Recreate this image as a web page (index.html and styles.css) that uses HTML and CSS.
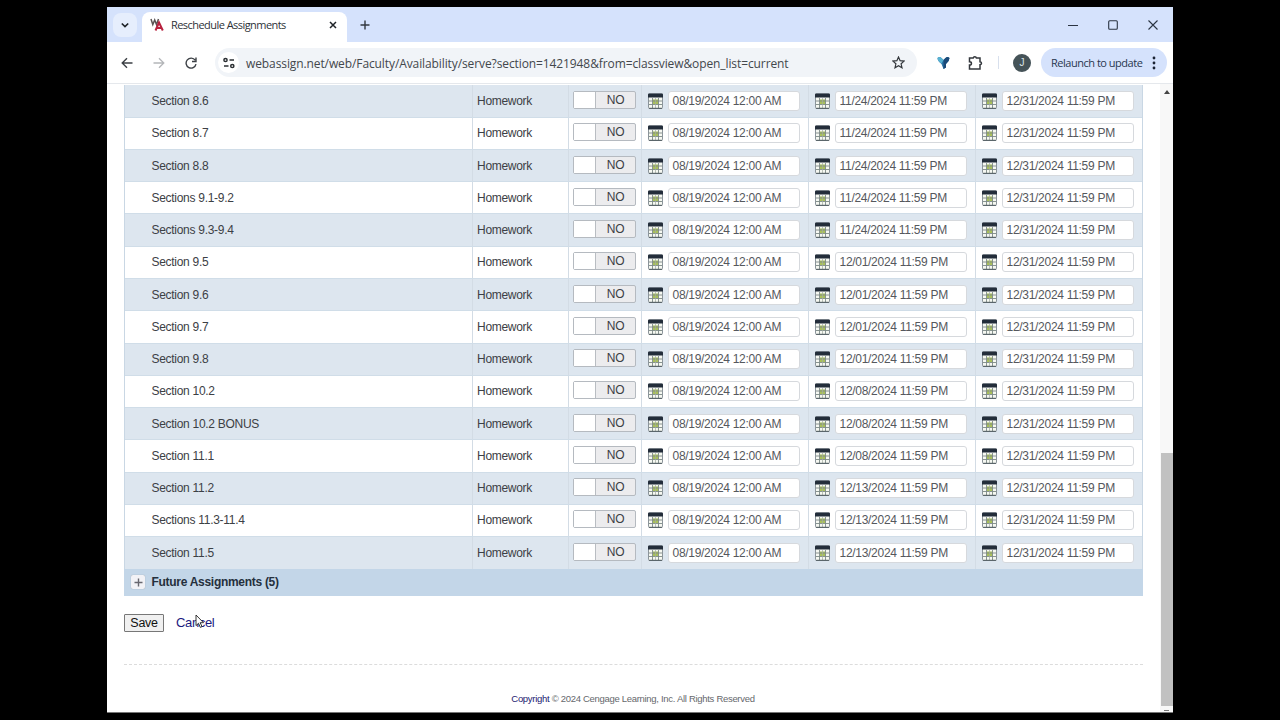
FILE: index.html
```html
<!DOCTYPE html>
<html lang="en">
<head>
    <meta charset="UTF-8">
    <title>Reschedule Assignments</title>
    <link rel="stylesheet" href="styles.css">
</head>
<body>
    <svg class="defs" width="0" height="0">
        <symbol id="calendar" viewBox="0 0 15 16">
            <rect x="0.5" y="1" width="14" height="14.5" rx="1" fill="#f6f8f2" stroke="#8b949a"/>
            <rect x="5" y="6.5" width="5.5" height="4.5" fill="#a9c05a"/>
            <path d="M1 8h13M1 11.5h13M4.5 5v10M10.5 5v10" stroke="#7d8986" stroke-width="0.9" fill="none"/>
            <path d="M7.5 5v10" stroke="#a3aea0" stroke-width="0.7"/>
            <path d="M1 15.3h13" stroke="#4f5a60"/>
            <path d="M0 1.5Q0 0.5 1 0.5h13q1 0 1 1v3H0z" fill="#232d3a"/>
        </symbol>
    </svg>
    <div class="window">
        <div class="tab-strip">
            <div class="tab-search">
                <svg width="10" height="10" viewBox="0 0 10 10"><path d="M1.8 3.5L5 6.6l3.2-3.1" fill="none" stroke="#1f2328" stroke-width="1.7"/></svg>
            </div>
            <div class="tab">
                <svg class="favicon" width="14" height="14" viewBox="0 0 14 14">
                    <path d="M1 1l1.8 5.6L4.7 2l1.8 4.6L8.5 1" fill="none" stroke="#5a5454" stroke-width="1.5"/>
                    <path d="M5.5 12.5L9 4.5l3.8 8M7 10h4.5" fill="none" stroke="#b8223f" stroke-width="2"/>
                </svg>
                <span class="tab-title">Reschedule Assignments</span>
                <svg class="tab-close" width="8" height="8" viewBox="0 0 8 8"><path d="M1 1l6 6M7 1L1 7" stroke="#1f2328" stroke-width="1.5"/></svg>
            </div>
            <svg class="new-tab" width="10" height="10" viewBox="0 0 10 10"><path d="M5 0.5v9M0.5 5h9" stroke="#33383f" stroke-width="1.4"/></svg>
            <div class="window-buttons">
                <svg width="10" height="10" viewBox="0 0 10 10"><path d="M0 5.5h10" stroke="#2b3442"/></svg>
                <svg width="10" height="10" viewBox="0 0 10 10"><rect x="0.7" y="0.7" width="8.6" height="8.6" rx="1" fill="none" stroke="#2b3442" stroke-width="1.1"/></svg>
                <svg width="10" height="10" viewBox="0 0 10 10"><path d="M0.5 0.5l9 9M9.5 0.5l-9 9" stroke="#2b3442" stroke-width="1.1"/></svg>
            </div>
        </div>
        <div class="toolbar">
            <div class="nav">
                <svg width="12" height="12" viewBox="0 0 12 12"><path d="M11.5 6H1.3M6 1.2L1.2 6 6 10.8" fill="none" stroke="#3c4045" stroke-width="1.4"/></svg>
                <svg width="12" height="12" viewBox="0 0 12 12"><path d="M0.5 6h10.2M6 1.2L10.8 6 6 10.8" fill="none" stroke="#b4b6b9" stroke-width="1.3"/></svg>
                <svg width="12" height="12" viewBox="0 0 12 12"><path d="M10.2 3.2A5 5 0 1 0 11 7.2M11 0.5v4H7" fill="none" stroke="#3c4045" stroke-width="1.4"/></svg>
            </div>
            <div class="address">
                <div class="site-info">
                    <svg width="12" height="12" viewBox="0 0 12 12"><g fill="none" stroke="#2b2f33" stroke-width="1.5"><circle cx="2.5" cy="3" r="1.6"/><path d="M6.5 3h4.5M1 9h4.5"/><circle cx="9.3" cy="9" r="1.6"/></g></svg>
                </div>
                <span class="url">webassign.net/web/Faculty/Availability/serve?section=1421948&amp;from=classview&amp;open_list=current</span>
                <svg class="star" width="13" height="13" viewBox="0 0 13 13"><path d="M6.5 1l1.6 3.7 4 .4-3 2.7.9 4-3.5-2.1L3 11.8l.9-4-3-2.7 4-.4z" fill="none" stroke="#33373c" stroke-width="1.2"/></svg>
            </div>
            <svg class="ext-logo" width="13" height="13" viewBox="0 0 13 13">
                <path d="M0.5 2Q2.5 0 4.5 2l2 2 2-2q2-2 4 0 0 3-3.5 6v3.5L6.5 13 4.5 8Q0.5 5 0.5 2z" fill="#2a75a8"/>
                <path d="M6.5 4l2-2q2-2 4 0 0 3-3.5 6v3.5L6.5 13z" fill="#1b4a78"/>
                <path d="M0.5 2Q2.5 0 4.5 2l2 2-2 3.5Q0.5 5 0.5 2z" fill="#58b2d2"/>
            </svg>
            <svg class="puzzle" width="15" height="15" viewBox="0 0 15 15"><path d="M1.5 3h3.7q.2-1.2 1.6-1.2T8.4 3H12v3.8q1.5.1 1.5 1.5T12 9.8V14H1.5v-3.9c2.6 0 2.6-3.3 0-3.3z" fill="none" stroke="#33373c" stroke-width="1.5"/></svg>
            <div class="divider"></div>
            <div class="avatar">J</div>
            <div class="relaunch">
                <span>Relaunch to update</span>
                <svg width="4" height="14" viewBox="0 0 4 14" fill="#1b2333"><circle cx="2" cy="2" r="1.4"/><circle cx="2" cy="7" r="1.4"/><circle cx="2" cy="12" r="1.4"/></svg>
            </div>
        </div>
        <div class="page">
            <div class="content">
                <div class="assignments">
                    <div id="rows"></div>
                    <div class="group-row">
                        <span class="expand"><svg width="9" height="9" viewBox="0 0 9 9"><path d="M4.5 0.5v8M0.5 4.5h8" stroke="#67676f" stroke-width="1.4"/></svg></span>
                        <span class="group-title">Future Assignments (5)</span>
                    </div>
                </div>
                <div class="actions">
                    <button class="save">Save</button>
                    <a class="cancel" href="#">Cancel</a>
                    <svg class="cursor" width="10" height="15" viewBox="0 0 10 15"><path d="M1 1v10.6l2.5-2.3 1.8 4.1 1.7-.8-1.8-3.9h3.3z" fill="#fff" stroke="#222" stroke-width="0.9"/></svg>
                </div>
                <div class="footer"><a href="#">Copyright</a> © 2024 Cengage Learning, Inc. All Rights Reserved</div>
            </div>
            <div class="scrollbar">
                <span class="arrow-up"></span>
                <span class="thumb"></span>
                <span class="arrow-down"></span>
            </div>
        </div>
    </div>
    <script>
        const assignments = [
            ['Section 8.6', '11/24/2024'],
            ['Section 8.7', '11/24/2024'],
            ['Section 8.8', '11/24/2024'],
            ['Sections 9.1-9.2', '11/24/2024'],
            ['Sections 9.3-9.4', '11/24/2024'],
            ['Section 9.5', '12/01/2024'],
            ['Section 9.6', '12/01/2024'],
            ['Section 9.7', '12/01/2024'],
            ['Section 9.8', '12/01/2024'],
            ['Section 10.2', '12/08/2024'],
            ['Section 10.2 BONUS', '12/08/2024'],
            ['Section 11.1', '12/08/2024'],
            ['Section 11.2', '12/13/2024'],
            ['Sections 11.3-11.4', '12/13/2024'],
            ['Section 11.5', '12/13/2024']
        ];

        function dateCell(value) {
            return `<div class="cell date"><svg class="calendar" width="15" height="16"><use href="#calendar"/></svg><span class="field">${value}</span></div>`;
        }

        document.getElementById('rows').innerHTML = assignments.map(([name, due]) => `
            <div class="row">
                <div class="cell name">${name}</div>
                <div class="cell">Homework</div>
                <div class="cell switch-cell"><span class="switch"><i></i><b>NO</b></span></div>
                ${dateCell('08/19/2024 12:00 AM')}
                ${dateCell(due + ' 11:59 PM')}
                ${dateCell('12/31/2024 11:59 PM')}
            </div>`).join('');
    </script>
</body>
</html>
```
FILE: styles.css
```css
* {
    box-sizing: border-box;
}
body {
    margin: 0;
    height: 720px;
    padding: 7px 107px;
    background: #000;
    overflow: hidden;
    font-family: "Liberation Sans", Arial, sans-serif;
    font-size: 12px;
    color: #3c4045;
}
svg {
    display: block;
    flex: none;
}
.defs {
    position: absolute;
}
.window {
    width: 1066px;
    height: 706px;
    background: #fff;
    display: flex;
    flex-direction: column;
    border-bottom: 1px solid #777;
}
.tab-strip {
    height: 35px;
    background: #d5e2fc;
    display: flex;
    align-items: center;
    padding-left: 6px;
    flex: none;
}
.tab-search {
    width: 24px;
    height: 24px;
    border-radius: 8px;
    background: #e6eefd;
    display: flex;
    align-items: center;
    justify-content: center;
}
.tab {
    width: 205px;
    height: 30px;
    margin: 5px 0 0 5px;
    padding: 0 10px 5px 8px;
    background: #fff;
    border-radius: 8px 8px 0 0;
    display: flex;
    align-items: center;
}
.tab-title {
    margin-left: 7px;
    font: 11px "Open Sans", "Noto Sans", sans-serif;
    letter-spacing: -0.55px;
    color: #2e3238;
    flex: 1;
    white-space: nowrap;
}
.new-tab {
    margin-left: 13px;
}
.window-buttons {
    display: flex;
    gap: 30px;
    margin-left: auto;
    margin-right: 15px;
}
.toolbar {
    height: 42px;
    flex: none;
    display: flex;
    align-items: center;
    padding: 0 6px 0 14px;
    border-bottom: 1px solid #e5e8ec;
}
.nav {
    display: flex;
    gap: 20px;
}
.address {
    width: 702px;
    height: 29px;
    margin-left: 18px;
    padding: 0 12px 0 3px;
    border-radius: 15px;
    background: #f1f4f8;
    display: flex;
    align-items: center;
}
.site-info {
    width: 21px;
    height: 21px;
    border-radius: 50%;
    background: #fff;
    display: flex;
    align-items: center;
    justify-content: center;
}
.url {
    margin: 1px 0 0 7px;
    font: 12px "Open Sans", "Noto Sans", sans-serif;
    letter-spacing: -0.1px;
    color: #43474c;
    white-space: nowrap;
}
.star {
    margin-left: auto;
}
.ext-logo {
    margin-left: 20px;
}
.puzzle {
    margin-left: 18px;
}
.divider {
    width: 1px;
    height: 13px;
    margin-left: 15px;
    background: #d8e0ed;
}
.avatar {
    width: 18px;
    height: 18px;
    margin-left: 14px;
    border-radius: 50%;
    background: #455358;
    color: #dbe3e6;
    font-size: 10px;
    line-height: 18px;
    text-align: center;
    flex: none;
}
.relaunch {
    width: 126px;
    height: 29px;
    margin-left: auto;
    padding: 0 11px 0 10px;
    border-radius: 15px;
    background: #d5e2fc;
    display: flex;
    align-items: center;
    justify-content: space-between;
    font: 11px "Open Sans", "Noto Sans", sans-serif;
    letter-spacing: -0.48px;
    color: #28374f;
    white-space: nowrap;
    flex: none;
}
.page {
    flex: 1;
    min-height: 0;
    display: flex;
}
.content {
    width: 1019px;
    margin-left: 17px;
    padding-top: 1.4px;
}
.assignments {
    border: 1px solid #c9d7e4;
    border-width: 0 1px;
    letter-spacing: -0.29px;
}
.row {
    height: 32.28px;
    display: grid;
    grid-template-columns: 348px 96px 73px 167px 167px 1fr;
    border-bottom: 1px solid #d0dde8;
}
.row:nth-child(odd) {
    background: #dde6ef;
}
.row:last-child {
    border-bottom: 0;
}
.cell {
    display: flex;
    align-items: center;
    padding-left: 4px;
    border-right: 1px solid #d3dce5;
    white-space: nowrap;
}
.cell:last-child {
    border-right: 0;
}
.name {
    padding-left: 26.5px;
}
.switch {
    width: 63px;
    height: 18px;
    margin-bottom: 2px;
    border: 1px solid #b5bac0;
    border-radius: 2px;
    background: #ececee;
    display: flex;
}
.switch i {
    width: 22px;
    background: #fff;
    border-right: 1px solid #b9bdc2;
}
.switch b {
    flex: 1;
    text-align: center;
    font-weight: normal;
    line-height: 16px;
}
.date {
    padding-left: 5.5px;
}
.field {
    width: 132px;
    height: 20px;
    margin-left: 5px;
    padding-left: 4px;
    border: 1px solid #d6d9dd;
    border-radius: 3px;
    background: #fff;
    line-height: 18px;
    color: #55585d;
}
.group-row {
    height: 27px;
    margin: 0 -1px;
    padding: 0 0 1px 7px;
    background: #c3d6e8;
    display: flex;
    align-items: center;
}
.expand {
    width: 14px;
    height: 14px;
    border-radius: 2px;
    background: #f2f2f6;
    box-shadow: 0 0 1px #8c929c;
    display: flex;
    align-items: center;
    justify-content: center;
}
.group-title {
    margin-left: 6.5px;
    font-weight: bold;
    color: #25303d;
}
.actions {
    position: relative;
    height: 69px;
    padding-top: 18px;
    display: flex;
    align-items: flex-start;
    border-bottom: 1px dashed #dcdcdc;
}
.save {
    width: 40px;
    height: 18px;
    padding: 0;
    border: 1px solid #777;
    border-radius: 1px;
    background: #f0f0f0;
    font: 12.5px/15px "Liberation Sans", Arial, sans-serif;
    letter-spacing: -0.3px;
    color: #111;
}
.cancel {
    margin-left: 12px;
    font-size: 13px;
    letter-spacing: -0.35px;
    line-height: 17px;
    color: #1c1a80;
    text-decoration: none;
}
/* mouse pointer lies over the link */
.cursor {
    position: absolute;
    left: 71px;
    top: 18px;
}
.footer {
    margin-top: 28px;
    padding-right: 1px;
    text-align: center;
    font-size: 9.5px;
    letter-spacing: -0.3px;
    line-height: 12px;
    color: #66686c;
}
.footer a {
    color: #1c1a70;
    text-decoration: none;
}
.scrollbar {
    width: 13px;
    margin-left: auto;
    background: #f8f8f8;
    display: flex;
    flex-direction: column;
    align-items: center;
}
.arrow-up {
    margin-top: 6px;
    border: 3px solid transparent;
    border-top: 0;
    border-bottom: 4px solid #444;
}
.thumb {
    width: 12px;
    height: 253px;
    margin-top: auto;
    background: #c1c1c1;
}
.arrow-down {
    width: 5px;
    height: 1px;
    margin: 4px 0 1px;
    background: #777;
}
```
